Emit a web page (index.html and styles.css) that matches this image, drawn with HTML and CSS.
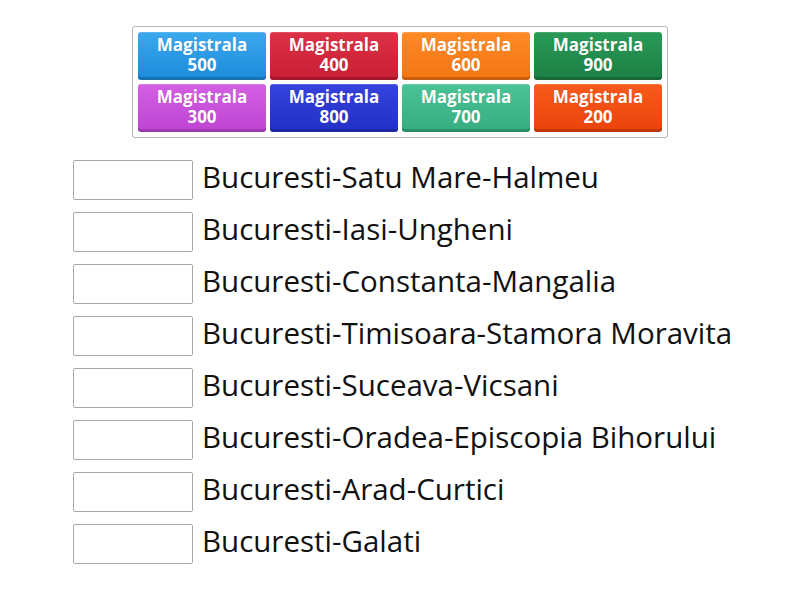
FILE: index.html
```html
<!DOCTYPE html>
<html lang="ro">
<head>
  <meta charset="UTF-8">
  <title>Magistrale</title>
  <link rel="stylesheet" href="styles.css">
</head>
<body>
  <div class="bank">
    <div class="tile blue">Magistrala<br>500</div>
    <div class="tile red">Magistrala<br>400</div>
    <div class="tile orange">Magistrala<br>600</div>
    <div class="tile green">Magistrala<br>900</div>
    <div class="tile purple">Magistrala<br>300</div>
    <div class="tile navy">Magistrala<br>800</div>
    <div class="tile teal">Magistrala<br>700</div>
    <div class="tile flame">Magistrala<br>200</div>
  </div>

  <div class="rows">
    <div class="row"><div class="slot"></div><span class="label">Bucuresti-Satu Mare-Halmeu</span></div>
    <div class="row"><div class="slot"></div><span class="label">Bucuresti-Iasi-Ungheni</span></div>
    <div class="row"><div class="slot"></div><span class="label">Bucuresti-Constanta-Mangalia</span></div>
    <div class="row"><div class="slot"></div><span class="label">Bucuresti-Timisoara-Stamora Moravita</span></div>
    <div class="row"><div class="slot"></div><span class="label">Bucuresti-Suceava-Vicsani</span></div>
    <div class="row"><div class="slot"></div><span class="label">Bucuresti-Oradea-Episcopia Bihorului</span></div>
    <div class="row"><div class="slot"></div><span class="label">Bucuresti-Arad-Curtici</span></div>
    <div class="row"><div class="slot"></div><span class="label">Bucuresti-Galati</span></div>
  </div>
</body>
</html>
```

FILE: styles.css
```css
html, body {
  margin: 0;
  padding: 0;
  background: #fff;
  font-family: 'Open Sans', sans-serif;
}

.bank {
  width: 524px;
  margin: 26px auto 0;
  padding: 5px;
  border: 1px solid #b4b4b4;
  border-radius: 3px;
  display: grid;
  grid-template-columns: repeat(4, 128px);
  gap: 4px;
}

.tile {
  height: 48px;
  box-sizing: border-box;
  padding-top: 3px;
  border-radius: 3px;
  color: #fff;
  font-size: 17px;
  font-weight: 700;
  line-height: 20px;
  text-align: center;
  text-shadow: 0 0 1px rgba(0, 0, 0, 0.15);
  box-shadow: inset 0 -3px 0 rgba(0, 0, 0, 0.18), inset 0 1px 0 rgba(255, 255, 255, 0.15);
}

.blue   { background: linear-gradient(#3ca9ee, #1b8ad9); }
.red    { background: linear-gradient(#dd3146, #c81d33); }
.orange { background: linear-gradient(#fd8a26, #f57512); }
.green  { background: linear-gradient(#2a9a58, #1b7f44); }
.purple { background: linear-gradient(#d35fe3, #be44d2); }
.navy   { background: linear-gradient(#3542dc, #2330c6); }
.teal   { background: linear-gradient(#4cc396, #36ad80); }
.flame  { background: linear-gradient(#f85a1c, #ea430b); }

.rows {
  margin-top: 22px;
  padding-left: 73px;
  display: flex;
  flex-direction: column;
  gap: 12px;
}

.row {
  display: flex;
  align-items: center;
  gap: 9px;
}

.slot {
  width: 120px;
  height: 40px;
  box-sizing: border-box;
  border: 1px solid #a8a8a8;
  border-radius: 2px;
  background: #fff;
}

.label {
  font-size: 29.5px;
  color: #111;
  line-height: 40px;
  margin-top: -6px;
}
```
